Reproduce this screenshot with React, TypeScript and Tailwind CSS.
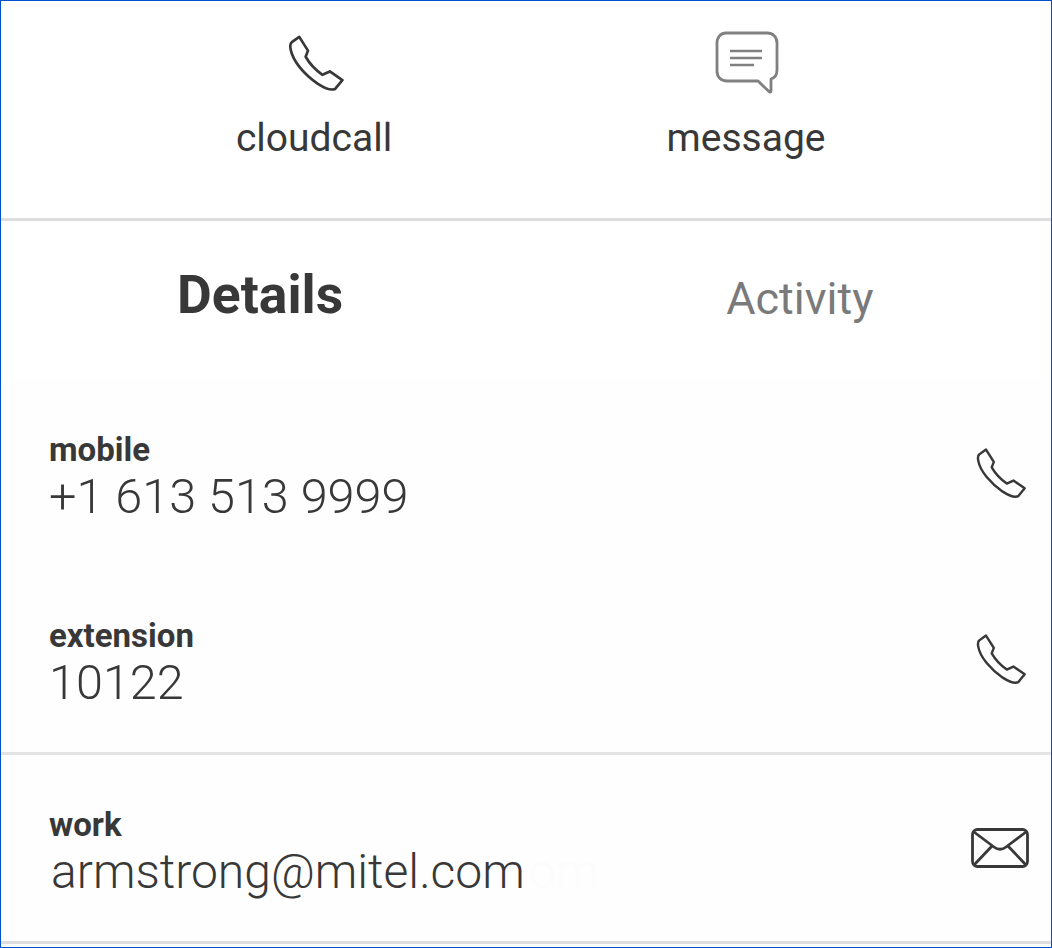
const ink = "text-[#383838]";

function PhoneIcon({ className }: { className: string }) {
  return (
    <svg viewBox="15 13 60 60" fill="none" stroke="currentColor" strokeWidth="2.8" strokeLinejoin="round" className={className}>
      <path d="M27.7 16 36.7 30.2 34.3 36.5C38 43 45 50.5 51.7 55.2L59.3 51.7 72.3 60.7 64.8 69.8C61 71.5 54 69 47 64.5 33 55 21 41 18.8 29 18 25 18.5 22.5 20 21.5Z" />
    </svg>
  );
}

function MessageIcon() {
  return (
    <svg viewBox="0 0 64 64" fill="none" stroke="#808080" strokeWidth="2.8" strokeLinejoin="round" className="ml-[2px] h-[64px] w-[64px]">
      <path d="M11 2H52C58 2 62 6 62 12V39C62 44 59 47 56 48V60C56 61.5 55 61.5 54 60.5L43 50H12C6 50 2 46 2 40V12C2 6 6 2 11 2Z" />
      <path d="M15 20H47M15 27H47M15 34H39" strokeWidth="2.4" />
    </svg>
  );
}

function MailIcon() {
  return (
    <svg viewBox="0 0 58 40" fill="none" stroke="currentColor" strokeWidth="2.8" strokeLinejoin="round" className="-mr-[2px] h-[40px] w-[58px]">
      <rect x="1.5" y="1.5" width="55" height="37" rx="5" />
      <path d="M3 4 23 19C27 22 31 22 35 19L55 4M21 18 3 37M37 18 55 37" />
    </svg>
  );
}

function Action({ label, icon, className }: { label: string; icon: React.ReactNode; className: string }) {
  return (
    <div className={`flex flex-col items-center ${className}`}>
      <div className="flex h-[68px] items-center">{icon}</div>
      <span className={`mt-[19px] text-[39px] leading-[44px] ${ink}`}>{label}</span>
    </div>
  );
}

function ContactRow({ label, value, valueClass, ghost, icon, className }: { label: string; value: string; valueClass: string; ghost?: string; icon: React.ReactNode; className: string }) {
  return (
    <div className={`flex items-center justify-between pt-[8px] pl-[48px] pr-[24px] ${className}`}>
      <div>
        <div className={`text-[33px] leading-[36px] font-bold ${ink}`}>{label}</div>
        <div className={`relative mt-[2px] -mb-[2px] leading-[54px] font-light ${ink} ${valueClass}`}>
          {value}
          {ghost && <span className="absolute top-0 left-[478px] text-[#fcfcfc]">{ghost}</span>}
        </div>
      </div>
      <div className={`mb-[8px] ${ink}`}>{icon}</div>
    </div>
  );
}

export default function App() {
  return (
    <div className="flex h-[948px] w-[1052px] flex-col border border-[#0052cc] bg-white font-['Roboto',sans-serif]">
      <div className="flex h-[220px] shrink-0 border-b-[3px] border-[#dedede] pt-[28px]">
        <Action label="cloudcall" icon={<PhoneIcon className="ml-[3px] h-[58px] w-[58px]" />} className={`ml-[236px] w-[154px] ${ink}`} />
        <Action label="message" icon={<MessageIcon />} className="ml-[275px] w-[160px]" />
      </div>

      <div className="flex h-[159px] shrink-0 items-center">
        <span className={`mb-[12px] ml-[176px] text-[53.5px] leading-[60px] font-bold ${ink}`}>Details</span>
        <span className="mb-[4px] ml-[383px] text-[45px] leading-[52px] text-[#7a7a7a]">Activity</span>
      </div>

      <div className="flex flex-1 flex-col bg-[#fefefe]">
        <ContactRow label="mobile" value="+1 613 513 9999" valueClass="text-[48.6px]" icon={<PhoneIcon className="h-[52px] w-[52px]" />} className="h-[186px]" />
        <ContactRow label="extension" value="10122" valueClass="text-[48.6px]" icon={<PhoneIcon className="h-[52px] w-[52px]" />} className="h-[189px] border-b-[3px] border-[#e4e4e4]" />
        <ContactRow label="work" value="armstrong@mitel.com" valueClass="ml-[2px] text-[48px]" ghost="om" icon={<MailIcon />} className="mb-[3px] flex-1 border-b-[3px] border-[#dedede]" />
      </div>
    </div>
  );
}
